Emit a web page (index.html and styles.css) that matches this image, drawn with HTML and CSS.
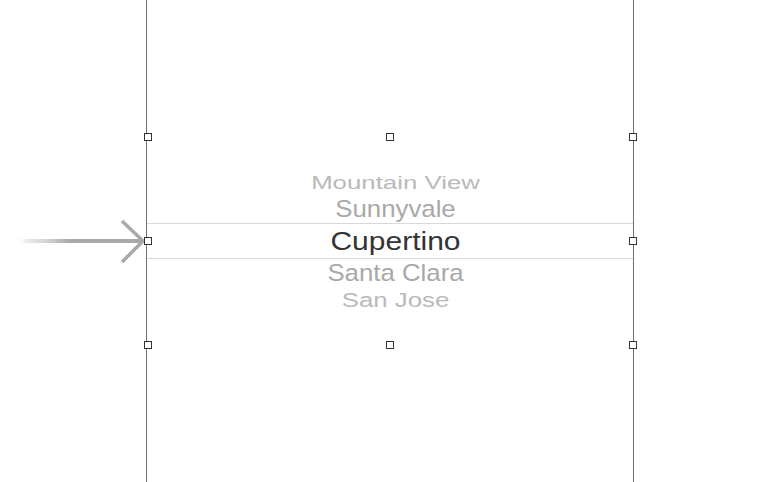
FILE: index.html
```html
<!DOCTYPE html>
<html lang="en">
<head>
  <meta charset="UTF-8">
  <title>Picker View</title>
  <link rel="stylesheet" href="styles.css">
</head>
<body>
  <div class="stage">
    <div class="entry">
      <svg class="entry-arrow" width="146" height="50" viewBox="0 0 146 50">
        <defs>
          <linearGradient id="fade" x1="18" y1="0" x2="146" y2="0" gradientUnits="userSpaceOnUse">
            <stop offset="0" stop-color="#a9a9a9" stop-opacity="0"/>
            <stop offset="0.1" stop-color="#a9a9a9" stop-opacity="0.3"/>
            <stop offset="0.22" stop-color="#a9a9a9" stop-opacity="0.5"/>
            <stop offset="0.4" stop-color="#a9a9a9" stop-opacity="1"/>
            <stop offset="1" stop-color="#a9a9a9" stop-opacity="1"/>
          </linearGradient>
        </defs>
        <line x1="18" y1="25" x2="143" y2="25" stroke="url(#fade)" stroke-width="4"/>
        <polyline points="122,5 143,25 122,46" fill="none" stroke="#a9a9a9" stroke-width="3.5"/>
      </svg>
    </div>

    <div class="scene">
      <div class="picker">
        <span class="handle h-tl"></span>
        <span class="handle h-tc"></span>
        <span class="handle h-tr"></span>
        <span class="handle h-ml"></span>
        <span class="handle h-mr"></span>
        <span class="handle h-bl"></span>
        <span class="handle h-bc"></span>
        <span class="handle h-br"></span>

        <div class="row row-far row-top"><span>Mountain View</span></div>
        <div class="row row-near row-above"><span>Sunnyvale</span></div>
        <div class="row row-current"><span>Cupertino</span></div>
        <div class="row row-near row-below"><span>Santa Clara</span></div>
        <div class="row row-far row-bottom"><span>San Jose</span></div>
      </div>
    </div>

    <div class="outside"></div>
  </div>
</body>
</html>
```

FILE: styles.css
```css
html, body {
  margin: 0;
  background: #fff;
}
body {
  font-family: "Liberation Sans", Arial, sans-serif;
  width: 768px;
  height: 482px;
  overflow: hidden;
}
.stage {
  display: grid;
  grid-template-columns: 146px 488px 1fr;
  height: 482px;
}
.entry {
  display: flex;
  align-items: center;
}
.entry-arrow {
  display: block;
}
.scene {
  border-left: 1px solid #707070;
  border-right: 1px solid #707070;
  padding-top: 137px;
}
.picker {
  position: relative;
  height: 208px;
  padding-top: 33px;
  box-sizing: border-box;
}
.handle {
  position: absolute;
  width: 8px;
  height: 8px;
  box-sizing: border-box;
  border: 1.5px solid #333;
  background: #fff;
  z-index: 2;
}
.h-tl { left: -3px; top: -4px; }
.h-tc { left: 239px; top: -4px; }
.h-tr { right: -4px; top: -4px; }
.h-ml { left: -3px; top: 100px; }
.h-mr { right: -4px; top: 100px; }
.h-bl { left: -3px; bottom: -4px; }
.h-bc { left: 239px; bottom: -4px; }
.h-br { right: -4px; bottom: -4px; }

.row {
  text-align: center;
  white-space: nowrap;
  padding-left: 11px;
}
.row span {
  display: inline-block;
}
.row-far {
  color: #b9b9b9;
  font-size: 25.8px;
}
.row-near {
  color: #a9a9a9;
  font-size: 25.8px;
}
.row-top {
  height: 25px;
  line-height: 25px;
}
.row-top span {
  line-height: 25px;
  transform: scaleY(0.72);
}
.row-above {
  height: 28px;
  line-height: 29px;
}
.row-above span {
  line-height: 29px;
  transform: scaleY(0.92);
}
.row-current {
  height: 34px;
  line-height: 34px;
  border-top: 1px solid #d8d8d8;
  border-bottom: 1px solid #d8d8d8;
  color: #333;
  font-size: 30px;
}
.row-current span {
  line-height: 34px;
  transform: scaleY(0.88);
}
.row-below {
  height: 31px;
  line-height: 29px;
}
.row-below span {
  line-height: 29px;
  transform: scaleY(0.92);
}
.row-bottom {
  height: 18px;
  line-height: 20px;
}
.row-bottom span {
  line-height: 20px;
  transform: scaleY(0.76);
}
```
